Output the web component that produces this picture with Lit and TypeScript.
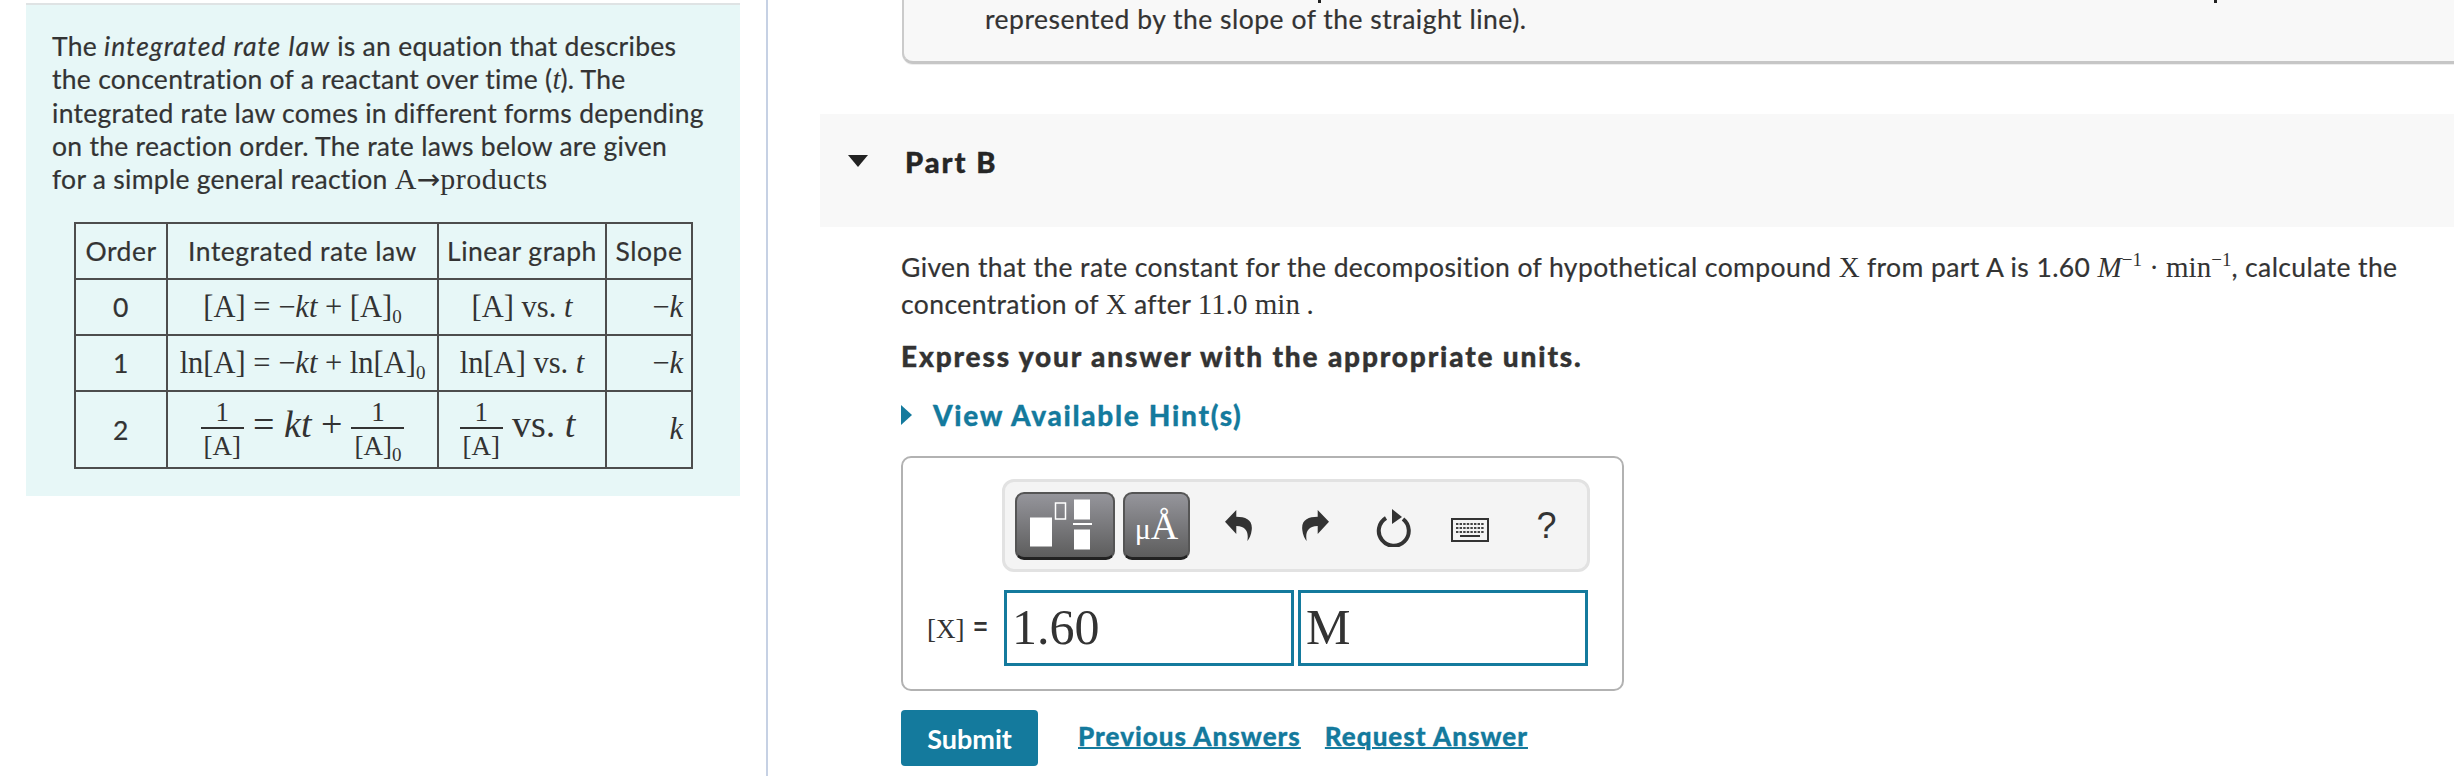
import { LitElement, html, css } from "lit";
import { customElement } from "lit/decorators.js";

@customElement("math-frac")
class MathFrac extends LitElement {
  static styles = css`
    :host { display: inline-flex; flex-direction: column; align-items: stretch; vertical-align: middle; text-align: center; font-size: 27px; }
    .n { line-height: 30px; padding: 0 3px; border-bottom: 2px solid #333; }
    .d { line-height: 34px; padding: 0 3px; }
  `;
  render() {
    return html`<span class="n"><slot name="n"></slot></span><span class="d"><slot name="d"></slot></span>`;
  }
}

@customElement("app-root")
class AppRoot extends LitElement {
  static styles = css`
    :host { --teal: #147a9d; display: block; width: 2454px; height: 776px; overflow: hidden; background: #fff; color: #333; font-family: "Lato", "Liberation Sans", sans-serif; }
    .page { display: flex; height: 776px; }
    .left { width: 766px; flex: none; padding: 3px 26px 0; box-sizing: border-box; }
    .divider { width: 2px; flex: none; background: #c6d1e4; }
    .panel { background: #e7f7f7; border-top: 2px solid #dfe3e4; height: 493px; box-sizing: border-box; padding: 25px 0 0 26px; }
    .intro { margin: 0; font-size: 26.5px; letter-spacing: 0.27px; line-height: 33.3px; white-space: pre-line; -webkit-text-stroke: 0.2px #333; }
    .intro em { letter-spacing: 1px; }
    .m { font-family: "Liberation Serif", serif; font-size: 29px; line-height: 1; letter-spacing: 0; -webkit-text-stroke: 0; }
    .mi { font-family: "Liberation Serif", serif; font-style: italic; font-size: 29px; line-height: 1; letter-spacing: 0; -webkit-text-stroke: 0; }
    .prod { font-size: 30px; letter-spacing: 0.5px; }
    .arrow { font-family: "DejaVu Sans", sans-serif; font-size: 28px; letter-spacing: 0; line-height: 1; }
    table { border-collapse: collapse; margin: 26px 0 0 22px; table-layout: fixed; width: 617px; font-size: 26.5px; letter-spacing: 0.5px; color: #333; -webkit-text-stroke: 0.2px #333; }
    .c1 { width: 92px; } .c2 { width: 271px; } .c3 { width: 168px; } .c4 { width: 86px; }
    td { border: 2px solid #4d4d4d; text-align: center; padding: 0; height: 54px; white-space: nowrap; }
    td.mth { font-family: "Liberation Serif", serif; font-size: 30.5px; letter-spacing: 0; -webkit-text-stroke: 0; }
    td.r { text-align: right; padding-right: 8px; }
    tr.big td { height: 75px; }
    .big-m { font-size: 38px; margin: 0 9px; }
    sub { font-size: 19px; line-height: 0; vertical-align: -6px; }
    .right { flex: 1; min-width: 0; padding: 0 0 0 52px; }
    .card { position: relative; margin-left: 82px; height: 64px; background: #f8f8f8; border: 2px solid #cbcbcb; border-top: 0; border-right: 0; border-bottom: 3px solid #c6c6c6; border-radius: 0 0 0 11px; box-shadow: 0 1px 0 #eee; box-sizing: border-box; font-size: 26.5px; letter-spacing: 0.5px; padding: 0 0 0 81px; -webkit-text-stroke: 0.2px #333; }
    .card p { margin: 0; line-height: 38px; }
    .speck { position: absolute; top: 0; width: 3px; height: 3px; background: #222; }
    .s1 { left: 414px; } .s2 { left: 1310px; }
    .band { margin-top: 50px; height: 113px; box-sizing: border-box; background: #f8f8f8; display: flex; align-items: center; padding: 0 0 18px 28px; }
    .tri { width: 0; height: 0; border-left: 10px solid transparent; border-right: 10px solid transparent; border-top: 12px solid #222; margin: 0 37px 1px 0; }
    .band b { font-size: 29px; font-weight: 900; letter-spacing: 2px; color: #262626; -webkit-text-stroke: 0.4px #262626; }
    .body { padding: 22px 0 0 81px; }
    .q { margin: 0; font-size: 26.5px; letter-spacing: 0.4px; line-height: 37px; width: 1520px; -webkit-text-stroke: 0.2px #333; }
    .q sup { font-size: 19px; line-height: 0; vertical-align: 11px; }
    .express { margin: 14px 0 0; font-size: 28px; font-weight: 900; letter-spacing: 1.85px; -webkit-text-stroke: 0.4px #333; line-height: 38px; }
    .hint { display: flex; align-items: center; gap: 21px; margin-top: 21px; color: var(--teal); font-size: 28px; font-weight: 900; letter-spacing: 1.7px; line-height: 38px; -webkit-text-stroke: 0.3px #147a9d; }
    .hint i { width: 0; height: 0; border-top: 10px solid transparent; border-bottom: 10px solid transparent; border-left: 11px solid var(--teal); }
    .answer { margin-top: 22px; width: 723px; height: 235px; border: 2px solid #b2b2b2; border-radius: 10px; box-sizing: border-box; padding: 21px 34px 0 99px; }
    .tools { height: 93px; width: 588px; box-sizing: border-box; background: #f4f4f4; border: 3px solid #e2e2e2; border-radius: 12px; display: flex; align-items: center; padding: 0 0 0 10px; }
    .btn { height: 68px; border-radius: 9px; background: linear-gradient(#95959b, #5d5d5d); border: 2px solid #555; border-bottom: 3px solid #222; box-sizing: border-box; display: flex; align-items: center; justify-content: center; flex: none; }
    .b1 { width: 100px; margin-right: 8px; }
    .b2 { width: 67px; color: #fff; font-family: "Liberation Serif", serif; font-size: 38px; line-height: 1; margin-right: 10px; align-items: baseline; padding-top: 13px; }
    .b2 small { font-size: 30px; }
    .ic { width: 77px; flex: none; display: flex; justify-content: center; align-items: center; }
    .re { padding-top: 4px; }
    .kb { padding-top: 9px; }
    .qm { font-family: "Liberation Sans", sans-serif; font-size: 36px; color: #333; }
    .row { display: flex; align-items: center; margin: 18px 0 0 -75px; }
    .lbl { font-family: "Liberation Serif", serif; font-size: 27px; width: 77px; flex: none; display: flex; align-items: center; gap: 9px; padding-top: 3px; box-sizing: border-box; }
    .lbl span { font-family: "Liberation Sans", sans-serif; font-weight: 700; font-size: 24px; margin-top: -6px; }
    .inp { width: 290px; height: 76px; box-sizing: border-box; border: 3px solid var(--teal); font-family: "Liberation Serif", serif; font-size: 50px; display: flex; align-items: center; padding: 0 0 3px 5px; color: #333; }
    .inp + .inp { margin-left: 4px; }
    .actions { display: flex; align-items: center; margin-top: 19px; }
    .submit { width: 137px; height: 56px; background: var(--teal); border-radius: 4px; color: #fff; font-size: 27px; font-weight: 700; display: flex; align-items: center; justify-content: center; margin-right: 40px; }
    .link { color: var(--teal); font-size: 26px; font-weight: 900; letter-spacing: 1px; text-decoration: underline; text-decoration-thickness: 2px; margin: 0 24px 5px 0; -webkit-text-stroke: 0.3px #147a9d; }
  `;

  render() {
    return html`<div class="page">
      <div class="left"><div class="panel">
        <p class="intro">The <em>integrated rate law</em> is an equation that describes
the concentration of a reactant over time (<span class="mi">t</span>). The
integrated rate law comes in different forms depending
on the reaction order. The rate laws below are given
for a simple general reaction <span class="m prod">A<span class="arrow">→</span>products</span></p>
        <table>
          <colgroup><col class="c1"/><col class="c2"/><col class="c3"/><col class="c4"/></colgroup>
          <tr><td>Order</td><td>Integrated rate law</td><td>Linear graph</td><td>Slope</td></tr>
          <tr><td>0</td><td class="mth">[A] = −<i>kt</i> + [A]<sub>0</sub></td><td class="mth">[A] vs. <i>t</i></td><td class="mth r">−<i>k</i></td></tr>
          <tr><td>1</td><td class="mth">ln[A] = −<i>kt</i> + ln[A]<sub>0</sub></td><td class="mth">ln[A] vs. <i>t</i></td><td class="mth r">−<i>k</i></td></tr>
          <tr class="big"><td>2</td>
            <td class="mth"><math-frac><span slot="n">1</span><span slot="d">[A]</span></math-frac><span class="big-m">= <i>kt</i> +</span><math-frac><span slot="n">1</span><span slot="d">[A]<sub>0</sub></span></math-frac></td>
            <td class="mth"><math-frac><span slot="n">1</span><span slot="d">[A]</span></math-frac><span class="big-m">vs. <i>t</i></span></td>
            <td class="mth r"><i>k</i></td></tr>
        </table>
      </div></div>
      <div class="divider"></div>
      <div class="right">
        <div class="card"><i class="speck s1"></i><i class="speck s2"></i><p>represented by the slope of the straight line).</p></div>
        <div class="band"><span class="tri"></span><b>Part B</b></div>
        <div class="body">
          <p class="q">Given that the rate constant for the decomposition of hypothetical compound <span class="m">X</span> from part A is 1.60 <span class="mi">M</span><sup class="m">−1</sup> <span class="m">· min</span><sup class="m">−1</sup>, calculate the concentration of <span class="m">X</span> after <span class="m">11.0 min</span> .</p>
          <p class="express">Express your answer with the appropriate units.</p>
          <div class="hint"><i></i><span>View Available Hint(s)</span></div>
          <div class="answer">
            <div class="tools">
              <div class="btn b1"><svg width="88" height="60" viewBox="0 0 88 60"><rect x="9" y="22.5" width="22" height="29" fill="#fff"/><rect x="34.5" y="8" width="10" height="16" fill="none" stroke="#fff" stroke-width="1.5"/><rect x="53" y="4.5" width="16" height="20" fill="#fff"/><rect x="52" y="28" width="19" height="2" fill="#fff"/><rect x="53" y="34.5" width="16" height="20" fill="#fff"/></svg></div>
              <div class="btn b2"><small>μ</small>Å</div>
              <div class="ic"><svg width="27" height="31" viewBox="0 0 27 31"><path d="M0 11.7 L11.3 0 V6.7 C21 6.7 28 10 26.7 20 C26.3 25 24 29 22.3 31 C23.5 25 23 16 11.3 16 V24 Z" fill="#333"/></svg></div>
              <div class="ic"><svg width="27" height="31" viewBox="0 0 27 31"><path d="M27 11.7 L15.7 0 V6.7 C6 6.7 -1 10 .3 20 C.7 25 3 29 4.7 31 C3.5 25 4 16 15.7 16 V24 Z" fill="#333"/></svg></div>
              <div class="ic re"><svg width="36" height="38" viewBox="0 0 36 38"><path d="M11 9 A15 15 0 1 0 28 10" fill="none" stroke="#333" stroke-width="4"/><path d="M17 0 L27 8 L17 15 Z" fill="#333"/></svg></div>
              <div class="ic kb"><svg width="38" height="24" viewBox="0 0 38 24"><rect x="1" y="1" width="36" height="22" fill="#f4f4f4" stroke="#333" stroke-width="2"/><path d="M5 6 H33 M5 10 H33 M5 14 H33" stroke="#444" stroke-width="2" stroke-dasharray="2.4 1.2"/><rect x="9" y="17" width="20" height="2" fill="#333"/></svg></div>
              <div class="ic qm">?</div>
            </div>
            <div class="row">
              <div class="lbl">[X]<span>=</span></div>
              <div class="inp">1.60</div>
              <div class="inp">M</div>
            </div>
          </div>
          <div class="actions"><div class="submit">Submit</div><span class="link">Previous Answers</span><span class="link">Request Answer</span></div>
        </div>
      </div>
    </div>`;
  }
}
